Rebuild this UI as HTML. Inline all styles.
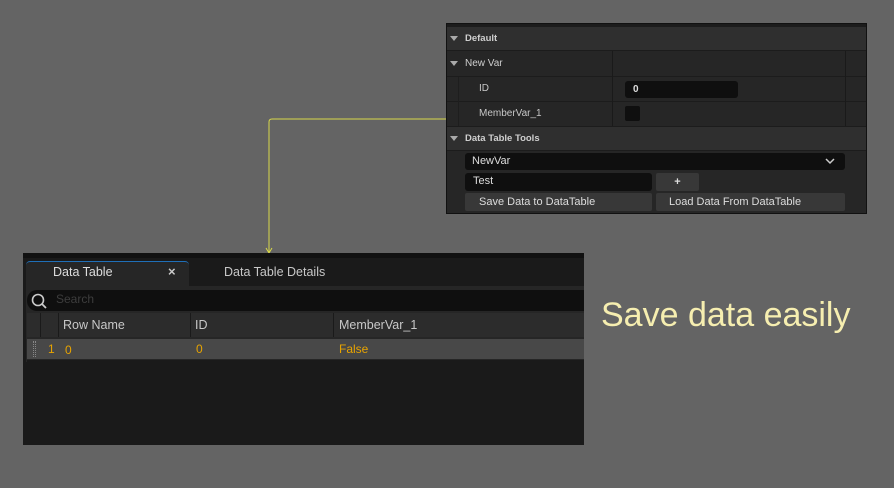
<!DOCTYPE html><html><head><style>
body{margin:0;width:894px;height:488px;background:#646464;position:relative;overflow:hidden;font-family:"Liberation Sans",sans-serif;}
.a{position:absolute;box-sizing:border-box}
.t{font-size:11px;color:#c8c8c8;}
.h{display:flex;align-items:center;padding-left:3px}
.b{font-weight:bold;font-size:9.5px;color:#cfcfcf}
.tri{display:inline-block;width:0;height:0;border-left:4px solid transparent;border-right:4px solid transparent;border-top:5px solid #aaa;margin-right:7px}
.f{font-size:11px;color:#ddd}
</style></head><body>
<svg class="a" style="left:0;top:0" width="894" height="488"><path d="M447 119 H272 Q269 119 269 122 V252" stroke="#d8d84a" fill="none" stroke-width="1"/><path d="M266 248 L269 253 L272 248" stroke="#d8d84a" fill="none"/></svg>
<!-- top panel -->
<div class="a" style="left:446px;top:23px;width:421px;height:191px;background:#1c1c1c;border:1px solid #111"></div>
<div class="a h" style="left:447px;top:27px;width:419px;height:23px;background:#2f2f2f"><span class="tri"></span><span class="b">Default</span></div>
<div class="a h" style="left:447px;top:51px;width:419px;height:25px;background:#262626"><span class="tri"></span><span class="b" style="font-weight:normal;font-size:10px">New Var</span></div>
<div class="a" style="left:447px;top:77px;width:419px;height:24px;background:#262626"></div>
<div class="a" style="left:447px;top:102px;width:419px;height:24px;background:#262626"></div>
<div class="a" style="left:612px;top:51px;width:1px;height:75px;background:#1a1a1a"></div>
<div class="a" style="left:845px;top:51px;width:1px;height:75px;background:#1a1a1a"></div>
<div class="a" style="left:458px;top:77px;width:1px;height:49px;background:#1e1e1e"></div>
<div class="a t" style="left:479px;top:77px;line-height:24px;font-size:10px">ID</div>
<div class="a t" style="left:479px;top:102px;line-height:24px;font-size:10px">MemberVar_1</div>
<div class="a" style="left:625px;top:81px;width:113px;height:17px;line-height:17px;background:#0f0f0f;border-radius:3px;color:#ddd;font-size:10px;padding-left:8px;font-weight:bold">0</div>
<div class="a" style="left:625px;top:106px;width:15px;height:15px;background:#0f0f0f;border-radius:2px"></div>
<div class="a h" style="left:447px;top:127px;width:419px;height:23px;background:#2f2f2f"><span class="tri"></span><span class="b">Data Table Tools</span></div>
<div class="a" style="left:447px;top:151px;width:419px;height:62px;background:#262626"></div>
<div class="a f" style="left:465px;top:153px;width:380px;height:17px;line-height:17px;background:#0f0f0f;border-radius:3px;padding-left:7px">NewVar<svg style="position:absolute;right:10px;top:5px" width="10" height="7"><path d="M1 1 L5 5 L9 1" stroke="#ccc" stroke-width="1.5" fill="none"/></svg></div>
<div class="a f" style="left:465px;top:173px;width:187px;height:18px;line-height:16px;background:#0f0f0f;border-radius:3px;padding-left:8px">Test</div>
<div class="a f" style="left:656px;top:173px;width:43px;height:18px;line-height:18px;background:#383838;border-radius:2px;text-align:center;font-weight:bold">+</div>
<div class="a f" style="left:465px;top:193px;width:187px;height:18px;line-height:18px;background:#383838;border-radius:2px;padding-left:14px">Save Data to DataTable</div>
<div class="a f" style="left:656px;top:193px;width:189px;height:18px;line-height:18px;background:#383838;border-radius:2px;padding-left:13px">Load Data From DataTable</div>
<!-- bottom panel -->
<div class="a" style="left:23px;top:253px;width:561px;height:192px;background:#1a1a1a"></div>
<div class="a" style="left:23px;top:253px;width:561px;height:5px;background:#111"></div>
<div class="a" style="left:26px;top:261px;width:163px;height:25px;background:#262626;border-top:1px solid #1f6fb8;border-radius:4px 4px 0 0"></div>
<div class="a t" style="left:53px;top:265px;font-size:12.5px;color:#ddd">Data Table</div>
<div class="a t" style="left:168px;top:264px;font-size:13px;color:#ccc;font-weight:bold">×</div>
<div class="a t" style="left:224px;top:265px;font-size:12.5px">Data Table Details</div>
<div class="a" style="left:26px;top:286px;width:558px;height:76px;background:#262626"></div>
<div class="a" style="left:27px;top:290px;width:557px;height:21px;background:#0f0f0f;border-radius:10px 0 0 10px"></div>
<svg class="a" style="left:30px;top:292px" width="18" height="18"><circle cx="8" cy="8" r="5.5" stroke="#ccc" stroke-width="1.6" fill="none"/><path d="M12 12 L16 16" stroke="#ccc" stroke-width="1.8"/></svg>
<div class="a" style="left:56px;top:292px;font-size:12px;color:#3d3d3d">Search</div>
<div class="a" style="left:27px;top:313px;width:557px;height:24px;background:#2c2c2c"></div>
<div class="a" style="left:40px;top:313px;width:1px;height:24px;background:#1a1a1a"></div>
<div class="a" style="left:58px;top:313px;width:1px;height:24px;background:#1a1a1a"></div>
<div class="a" style="left:190px;top:313px;width:1px;height:24px;background:#1a1a1a"></div>
<div class="a" style="left:333px;top:313px;width:1px;height:24px;background:#1a1a1a"></div>
<div class="a t" style="left:63px;top:318px;font-size:12.5px">Row Name</div>
<div class="a t" style="left:195px;top:318px;font-size:12.5px">ID</div>
<div class="a t" style="left:339px;top:318px;font-size:12.5px">MemberVar_1</div>
<div class="a" style="left:27px;top:339px;width:557px;height:20px;background:#484848"></div>
<div class="a" style="left:33px;top:341px;width:3px;height:16px;border-left:1px dotted #888;border-right:1px dotted #888"></div>
<div class="a" style="left:48px;top:342px;font-size:12px;color:#e8a400">1</div>
<div class="a" style="left:65px;top:343px;font-size:12px;color:#e8a400">0</div>
<div class="a" style="left:196px;top:342px;font-size:12px;color:#e8a400">0</div>
<div class="a" style="left:339px;top:342px;font-size:12px;color:#e8a400">False</div>
<div class="a" style="left:27px;top:360px;width:557px;height:85px;background:#1a1a1a"></div>
<div class="a" style="left:601px;top:296px;font-size:34px;color:#f6eeb0">Save data easily</div>
</body></html>
